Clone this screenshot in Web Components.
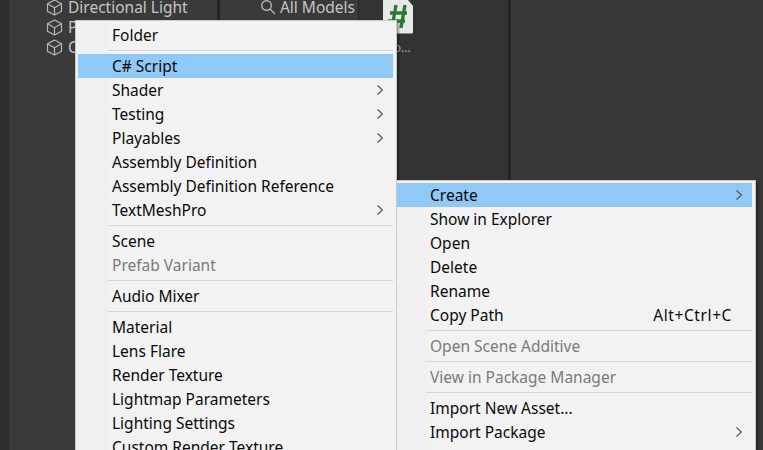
<!DOCTYPE html>
<html>
<head>
<meta charset="utf-8">
<style>
  html, body { margin: 0; height: 100%; overflow: hidden; background: #383838; }
</style>
</head>
<body>
<editor-backdrop>
  <scene-row slot="tree" label="Directional Light"></scene-row>
  <scene-row slot="tree" label="Plane"></scene-row>
  <scene-row slot="tree" label="Cube"></scene-row>
</editor-backdrop>

<context-menu style="left:75px; top:20px; width:322px" id="create-menu"></context-menu>
<context-menu style="left:396px; top:180px; width:360px" id="project-menu"></context-menu>

<script>
class EditorBackdrop extends HTMLElement {
    constructor() {
        super();
        this.attachShadow({ mode: 'open' });
        this.shadowRoot.innerHTML = `
            <style>
                :host {
                    display: grid;
                    grid-template-columns: 9px 208px 3px 139px 149px 3px 1fr;
                    height: 450px;
                    font-family: "Noto Sans", sans-serif;
                    font-size: 15.5px;
                    color: #c4c4c4;
                }
                .edge { background: #2e2e2e; }
                .tree { background: #3a3a3a; padding-left: 37px; margin-top: -3px; }
                .line { background: #232323; }
                .toolbar { background: #3a3a3a; }
                .search {
                    display: flex;
                    justify-content: flex-end;
                    gap: 4px;
                    box-sizing: border-box;
                    height: 20px;
                    padding-right: 3px;
                    border-right: 1px solid #232323;
                    line-height: 14px;
                }
                .assets { position: relative; background: #333; }
                .file { position: absolute; left: 24px; top: 0; }
                .name { position: absolute; left: 26px; top: 41px; font-size: 12px; line-height: 14px; color: #b0b0b0; }
                .side { background: #383838; }
            </style>
            <div class="edge"></div>
            <div class="tree"><slot name="tree"></slot></div>
            <div class="line"></div>
            <div class="toolbar">
                <div class="search">
                    <svg width="16" height="15" viewBox="0 0 16 15" fill="none" stroke="#b4b4b4" stroke-width="1.4">
                        <circle cx="6.5" cy="5.500" r="4.800"/><path d="M10 9l5 5"/>
                    </svg>
                    <span>All Models</span>
                </div>
            </div>
            <div class="assets">
                <svg class="file" width="30" height="34" viewBox="0 0 30 34">
                    <path d="M0 0h25l5 6v26a1.500 1.500 0 0 1-1.500 1.500H1.500A1.500 1.500 0 0 1 0 32z" fill="#e8e8e8"/>
                    <path d="M13 5l-4 23M22 5l-4 23M7 13h17M5 21h17" stroke="#2a7a35" stroke-width="3.400" fill="none"/>
                </svg>
                <span class="name">Do...</span>
            </div>
            <div class="line"></div>
            <div class="side"></div>
        `;
    }
}

class SceneRow extends HTMLElement {
    constructor() {
        super();
        this.attachShadow({ mode: 'open' });
        this.shadowRoot.innerHTML = `
            <style>
                :host {
                    display: flex;
                    align-items: center;
                    gap: 5px;
                    height: 20px;
                    white-space: nowrap;
                }
            </style>
            <svg width="17" height="17" viewBox="0 0 17 17" fill="none" stroke="#b8b8b8" stroke-width="1.2" stroke-linejoin="round">
                <path d="M8.500 1l7 3.800v7.400l-7 3.800-7-3.800V4.800z"/>
                <path d="M1.500 4.800l7 3.900 7-3.900M8.500 8.700v7.300"/>
            </svg>
            <span>${this.getAttribute('label')}</span>
        `;
    }
}

// separator = '-', item = [label, {sub, off, key, on}]
const createItems = [
    ['Folder'], '-',
    ['C# Script', { on: true }],
    ['Shader', { sub: true }],
    ['Testing', { sub: true }],
    ['Playables', { sub: true }],
    ['Assembly Definition'],
    ['Assembly Definition Reference'],
    ['TextMeshPro', { sub: true }], '-',
    ['Scene'],
    ['Prefab Variant', { off: true }], '-',
    ['Audio Mixer'], '-',
    ['Material'],
    ['Lens Flare'],
    ['Render Texture'],
    ['Lightmap Parameters'],
    ['Lighting Settings'],
    ['Custom Render Texture']
];

const projectItems = [
    ['Create', { sub: true, on: true }],
    ['Show in Explorer'],
    ['Open'],
    ['Delete'],
    ['Rename'],
    ['Copy Path', { key: 'Alt+Ctrl+C' }], '-',
    ['Open Scene Additive', { off: true }], '-',
    ['View in Package Manager', { off: true }], '-',
    ['Import New Asset...'],
    ['Import Package', { sub: true }]
];

class ContextMenu extends HTMLElement {
    constructor() {
        super();
        this.attachShadow({ mode: 'open' });
    }

    connectedCallback() {
        const first = this.id === 'create-menu';
        const items = first ? createItems : projectItems;
        const gutter = first ? 32 : 29;
        this.shadowRoot.innerHTML = `
            <style>
                :host {
                    display: block;
                    position: absolute;
                    box-sizing: border-box;
                    height: 500px;
                    padding: 2px 3px 0 ${first ? 2 : 0}px;
                    background: linear-gradient(to right, #f0f0f0 ${gutter}px, #f2f2f2 ${gutter}px);
                    border: 1px solid #c9c9c9;
                    box-shadow: 2px 2px 2px rgba(0, 0, 0, .35);
                    font-family: "Noto Sans", sans-serif;
                    font-size: 15.5px;
                    color: #0a0a0a;
                }
                .row {
                    display: flex;
                    align-items: center;
                    height: 24px;
                    line-height: 22px;
                    padding-left: ${first ? 34 : 33}px;
                    padding-right: 10px;
                    white-space: nowrap;
                }
                .row.on { background: #90c8f6; }
                .row.off { color: #7a7a7a; }
                .key { margin-left: auto; margin-right: 10px; letter-spacing: .6px; }
                .arrow { margin-left: auto; }
                .sep { height: 1px; margin: 3px 0 3px ${first ? 30 : 29}px; background: #d7d7d7; }
            </style>
            ${items.map(item => item === '-' ? '<div class="sep"></div>' : `
                <div class="row ${item[1] && item[1].on ? 'on' : ''} ${item[1] && item[1].off ? 'off' : ''}">
                    <span>${item[0]}</span>
                    ${item[1] && item[1].key ? `<span class="key">${item[1].key}</span>` : ''}
                    ${item[1] && item[1].sub ? `<svg class="arrow" width="6" height="10" viewBox="0 0 6 10" fill="none" stroke="#555" stroke-width="1.2"><path d="M.5 .5l5 4.500-5 4.500"/></svg>` : ''}
                </div>
            `).join('')}
        `;
    }
}

customElements.define('editor-backdrop', EditorBackdrop);
customElements.define('scene-row', SceneRow);
customElements.define('context-menu', ContextMenu);
</script>
</body>
</html>
